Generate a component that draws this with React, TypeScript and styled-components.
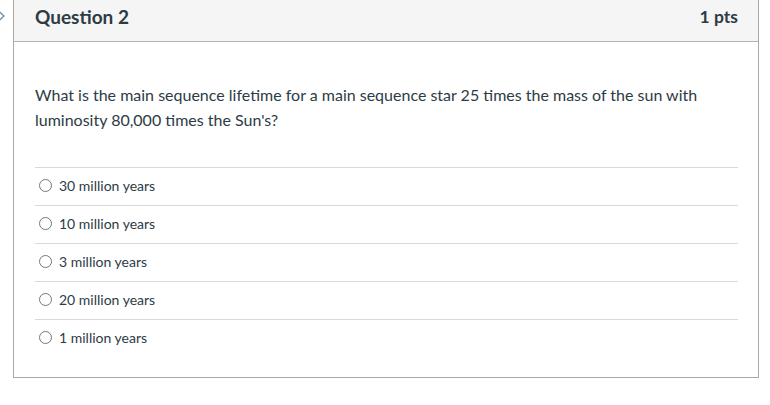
import React from "react";
import styled, { createGlobalStyle } from "styled-components";

const Global = createGlobalStyle`
  html, body { margin: 0; padding: 0; background: #ffffff; }
  body { font-family: Lato, "Open Sans", "Liberation Sans", sans-serif; color: #2d3b45; }
`;

const Page = styled.div`
  display: flex;
  align-items: flex-start;
  width: 770px;
`;

const Gutter = styled.div`
  width: 13px;
  flex: none;
  display: flex;
  padding-top: 10px;
  overflow: hidden;
`;

const Chevron = styled.svg`
  margin-left: -4px;
  flex: none;
`;

const Card = styled.div`
  width: 744px;
  margin-top: -1px;
  border: 1px solid #a9a9a9;
  background: #ffffff;
`;

const Header = styled.div`
  height: 42px;
  background: #f5f5f5;
  border-bottom: 1px solid #b5b5b5;
  display: flex;
  align-items: center;
  justify-content: space-between;
  padding: 0 20px 8px 21px;
  box-sizing: border-box;
`;

const Title = styled.h2`
  margin: 0;
  font-size: 19px;
  font-weight: 700;
  color: #2d3b45;
`;

const Points = styled.span`
  font-size: 17.5px;
  font-weight: 700;
  color: #2d3b45;
`;

const Body = styled.div`
  padding: 40px 20px 20px 21px;
`;

const Prompt = styled.p`
  margin: 0 0 35px;
  font-size: 16px;
  line-height: 25px;
  color: #2d3b45;
`;

const Answers = styled.div`
  display: flex;
  flex-direction: column;
`;

const Answer = styled.label`
  display: flex;
  align-items: center;
  gap: 7px;
  height: 34px;
  border-top: 1px solid #d9d9d9;
  padding: 0 0 3px 4px;
  box-sizing: content-box;
  font-size: 14px;
  color: #2d3b45;
`;

const Radio = styled.span`
  width: 11px;
  height: 11px;
  border-radius: 50%;
  border: 1px solid #777777;
  background: #ffffff;
  flex: none;
`;

const answers = [
  "30 million years",
  "10 million years",
  "3 million years",
  "20 million years",
  "1 million years",
];

export default function App() {
  return (
    <>
      <Global />
      <Page>
        <Gutter>
          <Chevron width="10" height="12" viewBox="0 0 10 12">
            <path d="M3 1.5 L8 6 L3 10.5" fill="none" stroke="#6b87a6" strokeWidth="1.2" />
          </Chevron>
        </Gutter>
        <Card>
          <Header>
            <Title>Question 2</Title>
            <Points>1 pts</Points>
          </Header>
          <Body>
            <Prompt>
              What is the main sequence lifetime for a main sequence star 25 times the mass of the sun with
              luminosity 80,000 times the Sun's?
            </Prompt>
            <Answers>
              {answers.map((a) => (
                <Answer key={a}>
                  <Radio />
                  {a}
                </Answer>
              ))}
            </Answers>
          </Body>
        </Card>
      </Page>
    </>
  );
}
